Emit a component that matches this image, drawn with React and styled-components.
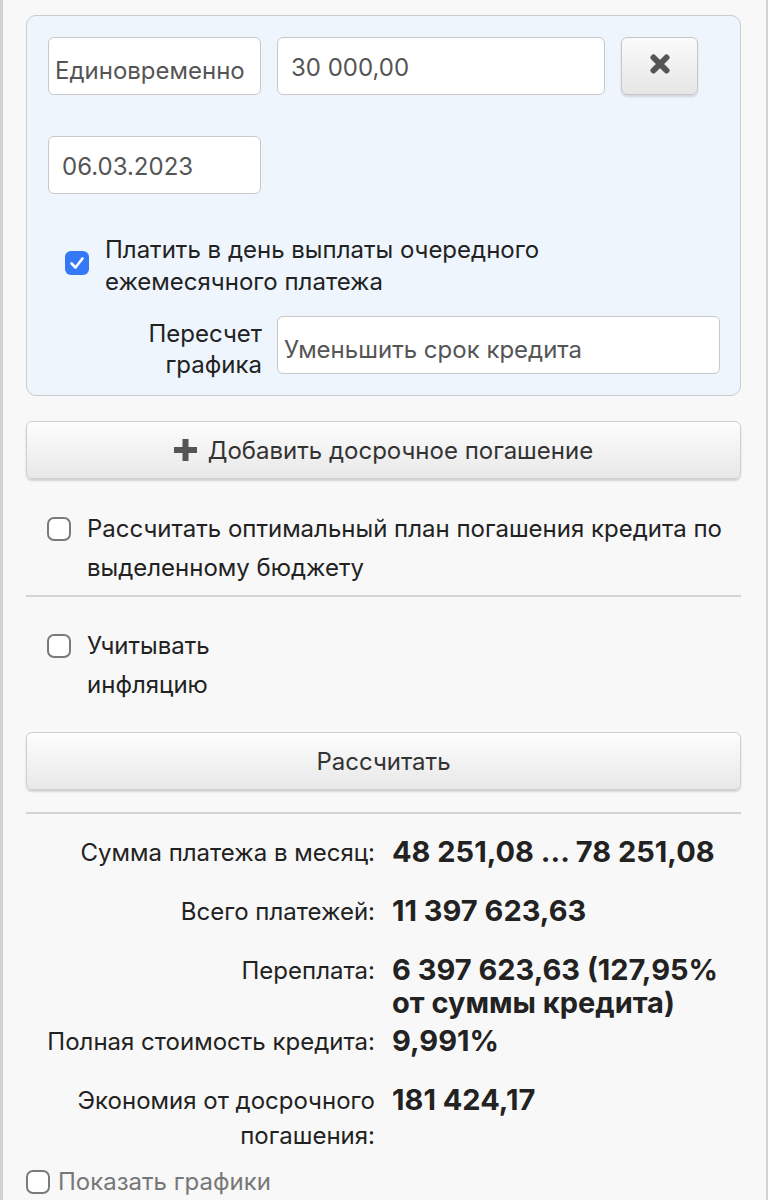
import React from 'react'
import styled, { createGlobalStyle } from 'styled-components'

const GlobalStyle = createGlobalStyle`
  html, body {
    margin: 0;
    padding: 0;
    background: #f8f8f8;
  }
  body {
    font-family: Inter, 'Liberation Sans', Arial, sans-serif;
    color: #333;
  }
`

const results = [
  { label: 'Сумма платежа в месяц:', value: '48 251,08 ... 78 251,08' },
  { label: 'Всего платежей:', value: '11 397 623,63' },
  { label: 'Переплата:', value: '6 397 623,63 (127,95% от суммы кредита)', tight: true },
  { label: 'Полная стоимость кредита:', value: '9,991%' },
  { label: 'Экономия от досрочного погашения:', value: '181 424,17' },
]

const RemoveIcon = () => (
  <svg width='22' height='20' viewBox='0 0 22 20'>
    <path d='M4.5 3.5 L17.5 16.5 M17.5 3.5 L4.5 16.5' stroke='#555' strokeWidth='6' strokeLinecap='round' />
  </svg>
)

const PlusIcon = () => (
  <svg width='23' height='22' viewBox='0 0 23 22'>
    <path d='M8.5 0 H14.5 V8 H23 V14 H14.5 V22 H8.5 V14 H0 V8 H8.5 Z' fill='#555' />
  </svg>
)

const CheckMark = () => (
  <svg width='24' height='24' viewBox='0 0 24 24'>
    <path d='M6.5 12.5 L10.5 16.5 L17.5 7.5' stroke='#fff' strokeWidth='2.6' fill='none' strokeLinecap='round' strokeLinejoin='round' />
  </svg>
)

const App = () => {
  return (
    <Page>
      <GlobalStyle />
      <Panel>
        <FieldRow>
          <Select width='213px' defaultValue='once'>
            <option value='once'>Единовременно</option>
          </Select>
          <TextInput width='328px' defaultValue='30 000,00' />
          <RemoveButton type='button'>
            <RemoveIcon />
          </RemoveButton>
        </FieldRow>
        <FieldRow top='41px'>
          <TextInput width='213px' defaultValue='06.03.2023' />
        </FieldRow>
        <PanelCheck>
          <CheckedBox>
            <CheckMark />
          </CheckedBox>
          <PanelCheckText>
            Платить в день выплаты очередного ежемесячного платежа
          </PanelCheckText>
        </PanelCheck>
        <RecalcRow>
          <RecalcLabel>Пересчет графика</RecalcLabel>
          <Select width='100%' defaultValue='term'>
            <option value='term'>Уменьшить срок кредита</option>
          </Select>
        </RecalcRow>
      </Panel>

      <WideButton type='button' top='25px'>
        <PlusIcon />
        Добавить досрочное погашение
      </WideButton>

      <Option top='30px'>
        <EmptyBox />
        <OptionText>
          Рассчитать оптимальный план погашения кредита по выделенному бюджету
        </OptionText>
      </Option>
      <Divider top='8px' />
      <Option top='29px'>
        <EmptyBox />
        <OptionText width='140px'>Учитывать инфляцию</OptionText>
      </Option>

      <WideButton type='button' top='28px'>
        Рассчитать
      </WideButton>
      <Divider top='22px' />

      <Results>
        {results.map((r) => (
          <ResultRow key={r.label} tight={r.tight}>
            <ResultLabel>{r.label}</ResultLabel>
            <ResultValue>{r.value}</ResultValue>
          </ResultRow>
        ))}
      </Results>

      <ChartsToggle>
        <EmptyBox />
        <ChartsText>Показать графики</ChartsText>
      </ChartsToggle>
    </Page>
  )
}

export default App

const Page = styled.div`
  box-sizing: border-box;
  width: 768px;
  min-height: 1200px;
  padding: 15px 25px 0 23px;
  border-left: 3px solid #d2d2d2;
  border-right: 2px solid #d2d2d2;
  background: #f8f8f8;
`

const Panel = styled.div`
  padding: 21px 20px 15px 21px;
  background: #eef5fd;
  border: 1px solid #c9ccd0;
  border-radius: 10px;
`

const FieldRow = styled.div`
  display: flex;
  gap: 16px;
  margin-top: ${(p) => p.top || '0'};
`

const fieldBase = `
  box-sizing: border-box;
  height: 58px;
  background: #fff;
  border: 1px solid #c8c8c8;
  border-radius: 6px;
  font-family: Inter, 'Liberation Sans', Arial, sans-serif;
  font-size: 24px;
  color: #555;
  outline: none;
`

const TextInput = styled.input`
  ${fieldBase}
  width: ${(p) => p.width};
  padding: 3px 13px 0;
`

const Select = styled.select`
  ${fieldBase}
  appearance: none;
  -webkit-appearance: none;
  width: ${(p) => p.width};
  padding: 9px 6px 0;
`

const RemoveButton = styled.button`
  box-sizing: border-box;
  width: 77px;
  height: 58px;
  display: flex;
  align-items: center;
  justify-content: center;
  padding-bottom: 6px;
  border: 1px solid #c6c6c6;
  border-radius: 6px;
  background: linear-gradient(#fbfbfb, #e6e6e6);
  box-shadow: 0 2px 2px rgba(0, 0, 0, 0.12);
`

const PanelCheck = styled.label`
  display: flex;
  gap: 16px;
  margin-top: 40px;
  padding-left: 17px;
`

const CheckedBox = styled.span`
  flex: none;
  width: 24px;
  height: 24px;
  margin-top: 17px;
  border-radius: 6px;
  background: #3478f6;
`

const PanelCheckText = styled.span`
  font-size: 24px;
  line-height: 32px;
  color: #222;
  max-width: 470px;
`

const RecalcRow = styled.div`
  display: grid;
  grid-template-columns: 214px 1fr;
  gap: 15px;
  align-items: start;
  margin-top: 18px;
`

const RecalcLabel = styled.div`
  text-align: right;
  font-size: 24px;
  line-height: 31px;
  color: #222;
  padding-left: 80px;
  margin-top: 2px;
`

const WideButton = styled.button`
  box-sizing: border-box;
  width: 100%;
  height: 58px;
  margin-top: ${(p) => p.top};
  display: flex;
  align-items: center;
  justify-content: center;
  gap: 11px;
  border: 1px solid #cfcfcf;
  border-radius: 6px;
  background: linear-gradient(#fdfdfd, #e8e8e8);
  box-shadow: 0 2px 2px rgba(0, 0, 0, 0.15);
  font-family: Inter, 'Liberation Sans', Arial, sans-serif;
  font-size: 24px;
  color: #333;
`

const Option = styled.label`
  display: flex;
  gap: 16px;
  margin-top: ${(p) => p.top};
  padding-left: 21px;
`

const EmptyBox = styled.span`
  flex: none;
  box-sizing: border-box;
  width: 24px;
  height: 24px;
  margin-top: 8px;
  border: 2px solid #7a7a7a;
  border-radius: 7px;
  background: #fff;
`

const OptionText = styled.span`
  font-size: 24px;
  line-height: 39px;
  color: #222;
  width: ${(p) => p.width || 'auto'};
`

const Divider = styled.hr`
  margin: ${(p) => p.top} 0 0;
  border: none;
  border-top: 2px solid #d4d4d4;
`

const Results = styled.div`
  margin-top: 21px;
`

const ResultRow = styled.div`
  display: grid;
  grid-template-columns: 1fr 1fr;
  gap: 17px;
  margin-bottom: ${(p) => (p.tight ? '5px' : '24px')};
`

const ResultLabel = styled.div`
  text-align: right;
  font-size: 24px;
  line-height: 35px;
  color: #222;
`

const ResultValue = styled.div`
  font-size: 29px;
  line-height: 33px;
  font-weight: 700;
  color: #222;
`

const ChartsToggle = styled.label`
  display: flex;
  gap: 8px;
  margin-top: -15px;
`

const ChartsText = styled.span`
  font-size: 24px;
  line-height: 40px;
  color: #777;
`
